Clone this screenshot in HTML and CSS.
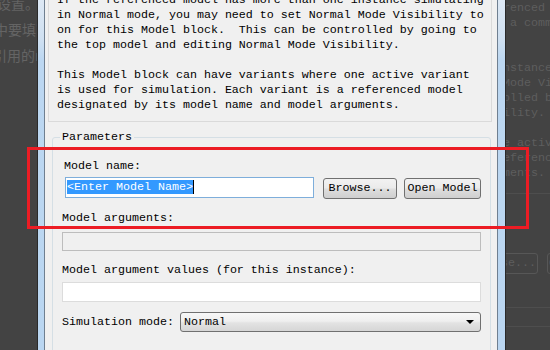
FILE: index.html
```html
<!DOCTYPE html>
<html>
<head>
<meta charset="utf-8">
<link rel="stylesheet" href="styles.css">
</head>
<body>
<div class="screen">
  <div class="bg-left">
    <div class="bgl l1">设置。</div>
    <div class="bgl l2">中要填写</div>
    <div class="bgl l3">引用的ref</div>
  </div>
  <div class="window">
    <div class="client">
      <div class="desc">
        <p>If the referenced model has more than one instance simulating
in Normal mode, you may need to set Normal Mode Visibility to
on for this Model block.  This can be controlled by going to
the top model and editing Normal Mode Visibility.</p>
        <p>This Model block can have variants where one active variant
is used for simulation. Each variant is a referenced model
designated by its model name and model arguments.</p>
      </div>
      <fieldset class="params">
        <legend>Parameters</legend>
        <div class="name-section">
          <div class="label first">Model name:</div>
          <div class="name-row">
            <div class="field focused"><span class="sel">&lt;Enter Model Name&gt;</span><span class="caret"></span></div>
            <button class="btn browse">Browse...</button>
            <button class="btn open">Open Model</button>
          </div>
        </div>
        <div class="label">Model arguments:</div>
        <div class="field disabled"></div>
        <div class="label">Model argument values (for this instance):</div>
        <div class="field plain"></div>
        <div class="sim-row">
          <span class="sim-label">Simulation mode:</span>
          <div class="select"><span>Normal</span><span class="arrow"></span></div>
        </div>
      </fieldset>
    </div>
  </div>
  <div class="bg-right">
    <div class="bgr-text">renced
 a comm


nstance
Mode Vi
olled b
ility.

e activ
eferenc
ments.</div>
    <div class="bgr-line l-a"></div>
    <div class="bgr-buttons">
      <span class="bgr-btn b1">Browse...</span>
      <span class="bgr-btn b2">Open Model</span>
    </div>
    <div class="bgr-line l-b"></div>
    <div class="bgr-line l-c"></div>
  </div>
  <div class="highlight"></div>
</div>
</body>
</html>
```
FILE: styles.css
```css
* { box-sizing: border-box; }
html, body { margin: 0; padding: 0; }
body {
  width: 550px;
  height: 350px;
  overflow: hidden;
  background: #434343;
  font-family: "Liberation Mono", monospace;
  font-size: 11.67px;
  line-height: 15px;
  color: #000;
}
.screen {
  position: relative;
  display: flex;
  width: 550px;
  height: 350px;
  overflow: hidden;
}
.bg-left {
  flex: 0 0 37px;
  overflow: hidden;
  font-family: "Noto Sans CJK SC", sans-serif;
  font-size: 14px;
  color: #646464;
  white-space: nowrap;
}
.bgl { height: 26px; line-height: 20px; }
.l1 { margin-left: -3px; margin-top: -7px; }
.l2 { margin-left: -6px; }
.l3 { margin-left: -7px; }

.window {
  flex: 0 0 469px;
  border-left: 1px solid #2a2a2a;
  border-right: 1px solid #2a2a2a;
  padding: 0 7px 0 6px;
  background: linear-gradient(#dde8f4 0, #cfe0f1 40px, #bcd7f1 60px, #bad6f1 100%);
  display: flex;
}
.client {
  flex: 1;
  background: #f0f0f0;
  border-left: 1px solid #6f7f90;
  border-right: 1px solid #6f7f90;
  padding: 0 5px 0 3px;
}
.desc {
  margin-top: -7px;
  border: 1px solid #dadada;
  border-top: none;
  padding: 0 0 8px 8px;
}
.desc p { margin: 0; white-space: pre; }
.desc p + p { margin-top: 15px; }

.params {
  margin: 8px 0 0 4px;
  width: 439px;
  border: 1px solid #d5dfe5;
  border-radius: 3px;
  padding: 0 9px 40px 9px;
  min-width: 0;
}
.params legend {
  padding: 0 2px;
  margin-left: -2px;
  line-height: 15px;
}
.name-section { padding-left: 2px; }
.label { margin-top: 12px; line-height: 15px; white-space: pre; }
.label.first { margin-top: 14px; }
.name-row {
  display: flex;
  align-items: flex-start;
  margin-top: 3px;
}
.field {
  height: 20px;
  border: 1px solid #d9d9d9;
  background: #fff;
}
.field.focused {
  width: 249px;
  height: 21px;
  margin-left: 1px;
  border-color: #7eaedb;
  padding: 2px 0 0 1px;
  display: flex;
  align-items: flex-start;
}
.sel {
  background: #3399ff;
  color: #fff;
  line-height: 14px;
  height: 14px;
  white-space: pre;
}
.caret {
  width: 1px;
  height: 14px;
  background: #000;
}
.field.disabled {
  margin-top: 6px;
  width: 419px;
  height: 19px;
  border: 1px solid #bdbdbd;
  background: #f0f0f0;
}
.field.plain {
  margin-top: 4px;
  width: 419px;
  border-color: #dcdcdc;
}
.btn {
  font-family: inherit;
  font-size: inherit;
  color: #000;
  height: 21px;
  margin-top: 1px;
  padding: 0;
  border: 1px solid #707070;
  border-radius: 3px;
  background: linear-gradient(#f2f2f2 0%, #ebebeb 45%, #dddddd 55%, #cfcfcf 100%);
  line-height: 17px;
}
.btn.browse { width: 74px; margin-left: 9px; }
.btn.open { width: 77px; margin-left: 7px; }

.sim-row {
  display: flex;
  align-items: center;
  margin-top: 10px;
}
.sim-label { white-space: pre; }
.select {
  margin-left: 6px;
  width: 302px;
  height: 20px;
  border: 1px solid #707070;
  border-radius: 3px;
  background: linear-gradient(#f7f7f7 0%, #efefef 45%, #e3e3e3 55%, #d6d6d6 100%);
  display: flex;
  align-items: center;
  justify-content: space-between;
  padding: 0 6px 0 3px;
}
.arrow {
  width: 0;
  height: 0;
  border-left: 4px solid transparent;
  border-right: 4px solid transparent;
  border-top: 4px solid #000;
}

.bg-right {
  flex: 1;
  overflow: hidden;
  color: #5e5e5e;
  position: relative;
}
.bgr-text {
  margin: 1px 0 0 -3px;
  white-space: pre;
}
.bgr-line {
  height: 1px;
  background: #4e4e4e;
}
.l-a { margin-top: 12px; }
.bgr-buttons {
  margin: 59px 0 0 -39px;
  display: flex;
  white-space: nowrap;
}
.bgr-btn {
  height: 21px;
  border: 1px solid #575757;
  border-radius: 3px;
  line-height: 19px;
  padding: 0 1px;
}
.bgr-btn.b1 { width: 74px; padding-left: 5px; }
.bgr-btn.b2 { margin-left: 9px; width: 77px; }
.l-b { margin-top: 33px; }
.l-c { margin-top: 18px; }

.highlight {
  position: absolute;
  left: 27px;
  top: 147px;
  width: 502px;
  height: 82px;
  border: 3px solid #ec1c24;
}
```
